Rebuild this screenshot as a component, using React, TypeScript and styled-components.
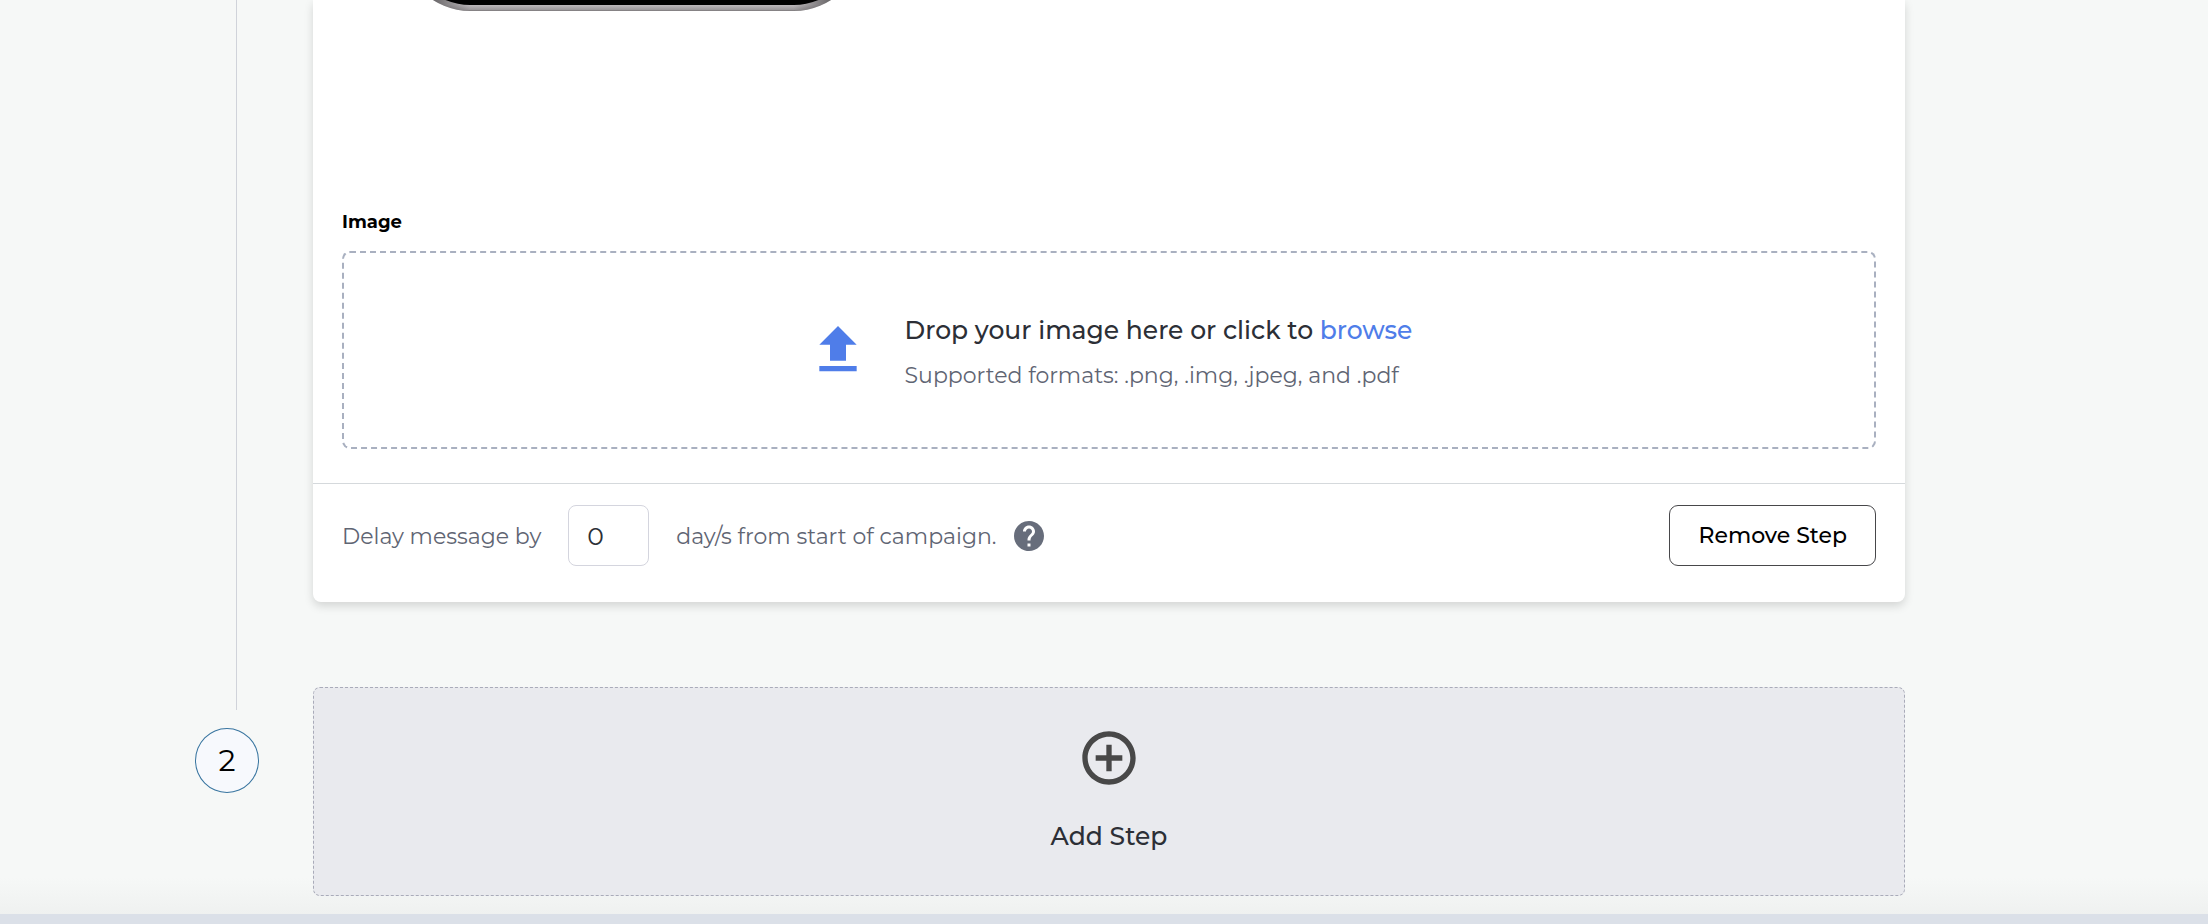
import React from "react";
import styled, { createGlobalStyle } from "styled-components";
import { MdAddCircleOutline, MdHelp, MdUpload } from "react-icons/md";

const GlobalStyle = createGlobalStyle`
  *, *::before, *::after { box-sizing: border-box; }
  html, body, #root { height: 100%; }
  body {
    margin: 0;
    background: #f6f8f7;
    color: #2c2f36;
    font-family: Montserrat, Inter, "Open Sans", sans-serif;
    font-weight: 500;
  }
  button, input { font: inherit; color: inherit; }
`;

const Page = styled.div`
  min-height: 100%;
  display: flex;
  flex-direction: column;
`;

const Steps = styled.main`
  flex: 1;
  display: grid;
  grid-template-columns: 64px 1fr;
  column-gap: 54px;
  padding: 0 303px 18px 195px;
  background: linear-gradient(to top, #eff1f0, #f6f8f7 36px);
`;

const Rail = styled.div`
  display: flex;
  flex-direction: column;
  align-items: center;
`;

const RailLine = styled.div`
  width: 1px;
  height: 710px;
  margin: 0 0 18px 19px;
  background: #d0d3da;
`;

const StepNumber = styled.div`
  width: 64px;
  height: 65px;
  display: grid;
  place-items: center;
  border: 1px solid #37749f;
  border-radius: 50%;
  background: #f7f9fd;
  color: #000;
  font-size: 30px;
  font-weight: 400;
`;

const StepColumn = styled.div`
  display: flex;
  flex-direction: column;
  gap: 85px;
`;

const Card = styled.section`
  border-radius: 0 0 8px 8px;
  background: #fff;
  box-shadow: 0 4px 10px rgba(0, 0, 0, 0.14);
`;

const CardBody = styled.div`
  padding: 0 29px 34px;
`;

const Preview = styled.div`
  height: 208px;
  padding-left: 59px;
`;

const PhoneBottom = styled.svg`
  display: block;
`;

const FieldTitle = styled.h3`
  margin: 0 0 15px;
  color: #000;
  font-size: 18px;
  line-height: 28px;
  font-weight: 700;
`;

const DropZone = styled.div`
  height: 198px;
  display: flex;
  align-items: center;
  justify-content: center;
  gap: 35px;
  border: 2px dashed #a9b0c0;
  border-radius: 8px;
`;

const UploadIcon = styled(MdUpload)`
  color: #4f7de9;
`;

const DropText = styled.div`
  display: flex;
  flex-direction: column;
  gap: 12px;
  padding-top: 6px;
`;

const DropTitle = styled.p`
  margin: 0;
  font-size: 25px;
  line-height: 32px;
`;

const BrowseLink = styled.a`
  color: #4f7de9;
  text-decoration: none;
`;

const Muted = styled.p`
  margin: 0;
  padding-top: 2px;
  color: #5f6573;
  font-size: 22px;
  line-height: 32px;
  font-weight: 400;
`;

const CardFooter = styled.footer`
  display: flex;
  align-items: center;
  justify-content: space-between;
  padding: 21px 29px 36px;
  border-top: 1px solid #d5d9dc;
`;

const Delay = styled.div`
  display: flex;
  align-items: center;
`;

const DelayLabel = styled(Muted).attrs({ as: "label" })``;

const DelayInput = styled.input`
  width: 81px;
  height: 61px;
  margin: 0 27px;
  padding: 0 18px;
  border: 1px solid #d4d5de;
  border-radius: 8px;
  background: #fff;
  font-size: 25px;
  font-weight: 400;
`;

const HelpButton = styled.button`
  display: flex;
  margin-left: 14px;
  padding: 0;
  border: 0;
  background: none;
  color: #676d7b;
`;

const RemoveButton = styled.button`
  height: 61px;
  padding: 0 28px;
  border: 1px solid #47474a;
  border-radius: 9px;
  background: #fff;
  color: #000;
  font-size: 22px;
`;

const AddStepButton = styled.button`
  width: 100%;
  height: 209px;
  display: flex;
  flex-direction: column;
  align-items: center;
  padding: 38px 0 0;
  gap: 30px;
  border: 1px dashed #a9abb9;
  border-radius: 7px;
  background: #e9eaee;
  font-size: 25px;
  line-height: 32px;
`;

const AddIcon = styled(MdAddCircleOutline)`
  color: #484848;
`;

const BottomBar = styled.div`
  height: 10px;
  background: #dbe0e8;
`;

export default function App() {
  return (
    <Page>
      <GlobalStyle />
      <Steps>
        <Rail>
          <RailLine />
          <StepNumber>2</StepNumber>
        </Rail>
        <StepColumn>
          <Card>
            <CardBody>
              <Preview>
                <PhoneBottom width="462" height="12" viewBox="0 0 462 12" aria-hidden="true">
                  <defs>
                    <linearGradient id="rim" x1="0" y1="0" x2="0" y2="12" gradientUnits="userSpaceOnUse">
                      <stop offset="0.4" stopColor="#bdb9bc" />
                      <stop offset="0.8" stopColor="#9c989b" />
                      <stop offset="0.95" stopColor="#6f6c6e" />
                    </linearGradient>
                    <linearGradient id="shade" x1="0" y1="0" x2="462" y2="0" gradientUnits="userSpaceOnUse">
                      <stop offset="0.06" stopColor="#000" stopOpacity="0.5" />
                      <stop offset="0.15" stopColor="#000" stopOpacity="0" />
                      <stop offset="0.85" stopColor="#000" stopOpacity="0" />
                      <stop offset="0.94" stopColor="#000" stopOpacity="0.5" />
                    </linearGradient>
                  </defs>
                  <rect x="1" y="-189" width="460" height="200" rx="68" fill="url(#rim)" />
                  <rect x="1" y="-189" width="460" height="200" rx="68" fill="url(#shade)" />
                  <rect x="7" y="-195" width="448" height="200" rx="62" fill="#000" />
                </PhoneBottom>
              </Preview>
              <FieldTitle>Image</FieldTitle>
              <DropZone>
                <UploadIcon size={64} />
                <DropText>
                  <DropTitle>
                    Drop your image here or click to <BrowseLink href="#browse">browse</BrowseLink>
                  </DropTitle>
                  <Muted>Supported formats: .png, .img, .jpeg, and .pdf</Muted>
                </DropText>
              </DropZone>
            </CardBody>
            <CardFooter>
              <Delay>
                <DelayLabel htmlFor="delay">Delay message by</DelayLabel>
                <DelayInput id="delay" type="text" inputMode="numeric" defaultValue="0" />
                <Muted>day/s from start of campaign.</Muted>
                <HelpButton type="button" aria-label="Help">
                  <MdHelp size={36} />
                </HelpButton>
              </Delay>
              <RemoveButton type="button">Remove Step</RemoveButton>
            </CardFooter>
          </Card>
          <AddStepButton type="button">
            <AddIcon size={64} />
            Add Step
          </AddStepButton>
        </StepColumn>
      </Steps>
      <BottomBar />
    </Page>
  );
}
